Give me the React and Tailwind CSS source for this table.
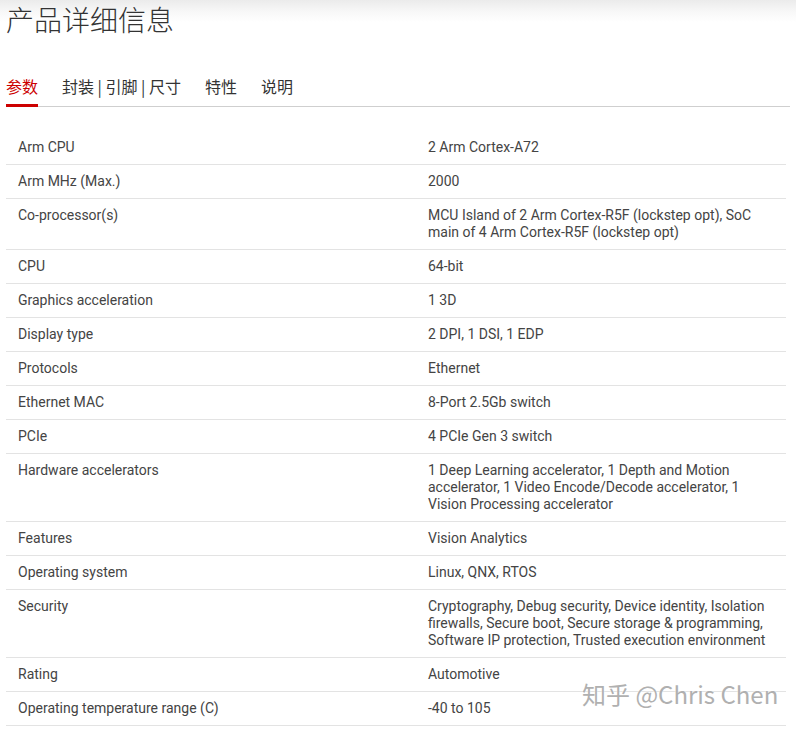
import React from 'react'

const specs = [
  ['Arm CPU', '2 Arm Cortex-A72'],
  ['Arm MHz (Max.)', '2000'],
  ['Co-processor(s)', 'MCU Island of 2 Arm Cortex-R5F (lockstep opt), SoC main of 4 Arm Cortex-R5F (lockstep opt)'],
  ['CPU', '64-bit'],
  ['Graphics acceleration', '1 3D'],
  ['Display type', '2 DPI, 1 DSI, 1 EDP'],
  ['Protocols', 'Ethernet'],
  ['Ethernet MAC', '8-Port 2.5Gb switch'],
  ['PCIe', '4 PCIe Gen 3 switch'],
  ['Hardware accelerators', '1 Deep Learning accelerator, 1 Depth and Motion accelerator, 1 Video Encode/Decode accelerator, 1 Vision Processing accelerator'],
  ['Features', 'Vision Analytics'],
  ['Operating system', 'Linux, QNX, RTOS'],
  ['Security', 'Cryptography, Debug security, Device identity, Isolation firewalls, Secure boot, Secure storage & programming, Software IP protection, Trusted execution environment'],
  ['Rating', 'Automotive'],
  ['Operating temperature range (C)', '-40 to 105'],
]

const tabs = ['参数', '封装 | 引脚 | 尺寸', '特性', '说明']

const App = () => {
  return (
    <div className="relative w-[796px] bg-white bg-[linear-gradient(to_bottom,#ebebeb_0px,#f8f8f8_12px,#ffffff_22px)] font-['Roboto','Noto_Sans_CJK_SC',sans-serif] text-[#444]">
      <h1 className="pl-[6px] text-[28px] leading-[38px] font-light text-[#333] font-['Noto_Sans_CJK_SC',sans-serif]">
        产品详细信息
      </h1>

      <div className="mx-[6px] mt-[36px] flex gap-[24px] border-b border-[#cfcfcf] font-['Noto_Sans_CJK_SC',sans-serif]">
        {tabs.map((tab, i) => (
          <div
            key={tab}
            className={
              i === 0
                ? '-mb-px border-b-[3px] border-[#c00] pb-[5px] text-[16px] leading-6 text-[#c00]'
                : 'pb-[8px] text-[16px] leading-6 text-[#333]'
            }
          >
            {tab}
          </div>
        ))}
      </div>

      <div className="mx-[6px] mt-[24px] w-[780px] text-[14px] leading-[17px]">
        {specs.map(([name, value]) => (
          <div key={name} className="flex border-b border-[#e3e3e3]">
            <div className="w-[410px] shrink-0 px-3 py-2">{name}</div>
            <div className="px-3 py-2">
              <div className="max-w-[344px]">{value}</div>
            </div>
          </div>
        ))}
      </div>

      <div className="absolute left-[582px] top-[680px] text-[24px] leading-[28px] text-[#b0b0b0] [text-shadow:0_0_2px_#fff] font-['Noto_Sans_CJK_SC',sans-serif]">
        知乎 @Chris Chen
      </div>
    </div>
  )
}

export default App
